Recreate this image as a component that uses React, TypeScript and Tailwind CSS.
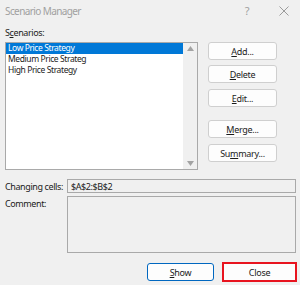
const scenarios = ["Low Price Strategy", "Medium Price Strateg", "High Price Strategy"];

function Btn({ label, u, className = "" }: { label: string; u: number; className?: string }) {
  return (
    <button
      className={`h-[18px] w-[69px] rounded-[3px] border border-[#cfcfcf] bg-[#fdfdfd] text-[9px] tracking-[-0.3px] text-[#1b1b1b] leading-none ${className}`}
    >
      {label.slice(0, u)}
      <span className="underline underline-offset-1">{label[u]}</span>
      {label.slice(u + 1)}
    </button>
  );
}

export default function App() {
  return (
    <div
      className="w-[300px] h-[285px] bg-[#f0f0f0] text-[#1b1b1b] flex flex-col overflow-hidden"
      style={{ fontFamily: '"Noto Sans", "Open Sans", sans-serif' }}
    >
      {/* title bar */}
      <div className="h-[22px] flex items-center pl-[5px] pr-[11px] text-[10px] tracking-[-0.6px] text-[#a0a0a0]">
        <span className="flex-1">Scenario Manager</span>
        <span className="mr-[30px] text-[11px]">?</span>
        <svg width="10" height="10" viewBox="0 0 10 10" stroke="#9b9b9b" strokeWidth="1">
          <path d="M0.5 0.5 L9.5 9.5 M9.5 0.5 L0.5 9.5" />
        </svg>
      </div>

      <div className="px-[5px] pt-[6px] text-[9px] tracking-[-0.4px] leading-none">
        <div className="mb-[4px] h-[10px]">
          S<span className="underline underline-offset-1">c</span>enarios:
        </div>

        <div className="flex">
          {/* list */}
          <div className="w-[193px] h-[128px] border border-[#a9a9a9] bg-white flex">
            <div className="flex-1">
              {scenarios.map((s, i) => (
                <div
                  key={s}
                  className={`h-[11px] pl-[2px] flex items-center text-[8.5px] ${
                    i === 0 ? "bg-[#0078d7] text-white" : "text-[#1b1b1b]"
                  }`}
                >
                  {s}
                </div>
              ))}
            </div>
            <div className="w-[14px] bg-[#f0f0f0] flex flex-col items-center justify-between py-[3px]">
              <svg width="7" height="5" viewBox="0 0 7 5">
                <path d="M3.5 0 L7 5 L0 5 Z" fill="#a3a3a3" />
              </svg>
              <svg width="7" height="5" viewBox="0 0 7 5">
                <path d="M0 0 L7 0 L3.5 5 Z" fill="#a3a3a3" />
              </svg>
            </div>
          </div>

          {/* buttons */}
          <div className="ml-[10px] flex flex-col">
            <Btn label="Add..." u={0} />
            <Btn label="Delete" u={0} className="mt-[5px]" />
            <Btn label="Edit..." u={0} className="mt-[6px]" />
            <Btn label="Merge..." u={0} className="mt-[13px]" />
            <Btn label="Summary..." u={2} className="mt-[6px]" />
          </div>
        </div>

        {/* changing cells / comment */}
        <div className="mt-[9px] grid grid-cols-[62px_1fr] gap-y-[3px] mr-[-1px]">
          <div className="flex items-center whitespace-nowrap">Changing cells:</div>
          <div className="h-[14px] border border-[#a9a9a9] flex items-center pl-[3px]">$A$2:$B$2</div>
          <div className="pt-[3px]">Comment:</div>
          <div className="h-[57px] border border-[#a9a9a9]" />
        </div>

        {/* footer */}
        <div className="mt-[9px] flex justify-end items-center mr-[-2px]">
          <button className="h-[18px] w-[67px] rounded-[3px] border border-[#0067c0] bg-[#fdfdfd] text-[9px] tracking-[-0.3px] leading-none">
            <span className="underline underline-offset-1">S</span>how
          </button>
          <div className="ml-[8px] w-[75px] h-[20px] border-[2px] border-[#e8141f] bg-[#fdfdfd] flex items-center justify-center text-[9px] tracking-[-0.3px]">
            Close
          </div>
        </div>
      </div>
    </div>
  );
}
